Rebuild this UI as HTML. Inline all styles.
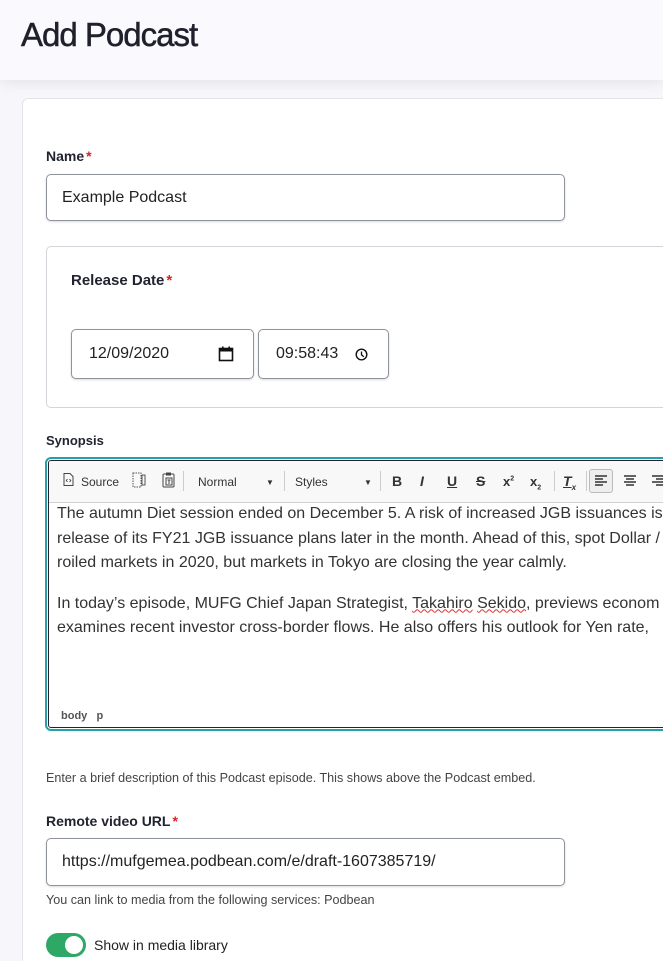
<!DOCTYPE html>
<html><head><meta charset="utf-8"><style>
*{box-sizing:border-box;margin:0;padding:0}
html,body{width:663px;height:961px;overflow:hidden}
body{background:#f7f7fb;font-family:"Liberation Sans",sans-serif;color:#222330;position:relative}
.hdr{position:absolute;left:0;top:0;width:663px;height:80px;background:#f9f9fe;box-shadow:0 4px 12px rgba(0,0,0,.07)}
.hdr h1{position:absolute;left:21px;top:16px;font-size:33px;font-weight:normal;letter-spacing:-1px;color:#1f202b;-webkit-text-stroke:.5px #1f202b}
.card{position:absolute;left:22px;top:98px;width:660px;height:900px;background:#fff;border:1px solid #e3e3ea;border-radius:6px}
.lbl{position:absolute;font-size:14px;font-weight:bold;color:#222330}
.lbl span{color:#d72222;margin-left:2px}
.inp{position:absolute;background:#fff;border:1px solid #8e929c;border-radius:5px;box-shadow:0 1px 2px rgba(0,0,0,.15);font-size:16px;color:#222;padding-left:15px;display:flex;align-items:center}
.fs{position:absolute;left:46px;top:246px;width:640px;height:162px;border:1px solid #d4d4da;border-radius:5px}
.ed{position:absolute;left:45px;top:457px;width:640px;height:274px;border:2px solid #26a0a6;border-radius:6px}
.edi{position:absolute;left:1px;top:1px;right:0;bottom:1px;border:1px solid #222330;border-radius:3px;background:#fff;overflow:hidden}
.tb{height:42px;background:#f8f8f8;border-bottom:1px solid #d1d1d1;position:relative;font-size:12px;color:#333}
.tb span{position:absolute;top:14px}
.txt{position:absolute;left:8px;top:41px;font-size:16px;color:#333;white-space:nowrap;line-height:24.5px}
.help{position:absolute;font-size:12.6px;color:#444;left:46px}
</style></head><body>
<div class="hdr"><h1>Add Podcast</h1></div>
<div class="card"></div>
<div class="lbl" style="left:46px;top:148px">Name<span>*</span></div>
<div class="inp" style="left:46px;top:174px;width:519px;height:47px">Example Podcast</div>
<div class="fs"></div>
<div class="lbl" style="left:71px;top:272px;font-size:15px">Release Date<span>*</span></div>
<div class="inp" style="left:71px;top:329px;width:183px;height:50px;padding-left:17px">12/09/2020
<svg style="position:absolute;left:146px;top:16px" width="16" height="16" viewBox="0 0 16 16"><rect x="1.5" y="2.5" width="13" height="12" fill="none" stroke="#111" stroke-width="1.6"/><rect x="1.5" y="2.5" width="13" height="3" fill="#111"/><rect x="4" y="0.5" width="1.6" height="3" fill="#111"/><rect x="10.4" y="0.5" width="1.6" height="3" fill="#111"/></svg></div>
<div class="inp" style="left:258px;top:329px;width:131px;height:50px;padding-left:17px">09:58:43
<svg style="position:absolute;left:96px;top:18px" width="13" height="13" viewBox="0 0 13 13"><circle cx="6.5" cy="6.5" r="5.3" fill="none" stroke="#111" stroke-width="1.4"/><path d="M6.5 3.5V6.8L8.8 8.8" fill="none" stroke="#111" stroke-width="1.3"/></svg></div>
<div class="lbl" style="left:46px;top:433px;font-size:13px">Synopsis</div>
<div class="ed"><div class="edi">
<div class="tb">
<span style="left:14px;top:12px"><svg width="11" height="13" viewBox="0 0 11 13"><path d="M1 .5h6l3 3v9H1z" fill="none" stroke="#444"/><path d="M4.5 6l-1.3 1.5 1.3 1.5M6.5 6l1.3 1.5-1.3 1.5" fill="none" stroke="#444" stroke-width=".9"/></svg></span>
<span style="left:32px">Source</span>
<span style="left:83px;top:11px"><svg width="14" height="16" viewBox="0 0 14 16"><rect x="1" y="1" width="8" height="14" fill="none" stroke="#555" stroke-dasharray="1.5 1"/><rect x="10" y="3" width="3" height="10" fill="none" stroke="#555"/></svg></span>
<span style="left:113px;top:11px"><svg width="13" height="16" viewBox="0 0 13 16"><rect x="1" y="2" width="11" height="13" rx="1" fill="none" stroke="#444"/><rect x="4" y="0.5" width="5" height="3" fill="#444"/><rect x="4" y="6" width="6" height="7" fill="none" stroke="#444"/><path d="M5.5 8h3M7 8v4" stroke="#444"/></svg></span>
<span style="left:134px;top:10px;width:1px;height:20px;background:#ccc"></span>
<span style="left:149px">Normal</span><span style="left:217px;font-size:8px;top:17px">▼</span>
<span style="left:235px;top:10px;width:1px;height:20px;background:#ccc"></span>
<span style="left:246px">Styles</span><span style="left:315px;font-size:8px;top:17px">▼</span>
<span style="left:331px;top:10px;width:1px;height:20px;background:#ccc"></span>
<span style="left:343px;font-weight:bold;font-size:14px;top:12px">B</span>
<span style="left:371px;font-style:italic;font-weight:bold;font-size:14px;top:12px">I</span>
<span style="left:398px;font-weight:bold;text-decoration:underline;font-size:14px;top:12px">U</span>
<span style="left:427px;font-weight:bold;text-decoration:line-through;font-size:14px;top:12px">S</span>
<span style="left:454px;font-weight:bold;font-size:13px;top:13px">x<sup style="font-size:7px">2</sup></span>
<span style="left:481px;font-weight:bold;font-size:13px;top:13px">x<sub style="font-size:7px">2</sub></span>
<span style="left:505px;top:10px;width:1px;height:20px;background:#ccc"></span>
<span style="left:514px;font-weight:bold;font-style:italic;text-decoration:underline;font-size:14px;top:12px">T<sub style="font-size:8px">x</sub></span>
<span style="left:537px;top:10px;width:1px;height:20px;background:#ccc"></span>
<span style="left:540px;top:8px;width:24px;height:24px;border:1px solid #bbb;border-radius:3px;background:#eee"></span>
<span style="left:546px;top:14px"><svg width="12" height="12" viewBox="0 0 12 12"><path d="M0 1h12M0 4h8M0 7h12M0 10h8" stroke="#333" stroke-width="1.5"/></svg></span>
<span style="left:575px;top:14px"><svg width="12" height="12" viewBox="0 0 12 12"><path d="M0 1h12M2 4h8M0 7h12M2 10h8" stroke="#333" stroke-width="1.5"/></svg></span>
<span style="left:603px;top:14px"><svg width="12" height="12" viewBox="0 0 12 12"><path d="M0 1h12M4 4h8M0 7h12M4 10h8" stroke="#333" stroke-width="1.5"/></svg></span>
</div>
<div class="txt">The autumn Diet session ended on December 5. A risk of increased JGB issuances is<br>release of its FY21 JGB issuance plans later in the month. Ahead of this, spot Dollar /<br>roiled markets in 2020, but markets in Tokyo are closing the year calmly.<div style="height:16px"></div>In today’s episode, MUFG Chief Japan Strategist, <span style="text-decoration:underline wavy #d33;text-decoration-thickness:1px">Takahiro</span> <span style="text-decoration:underline wavy #d33;text-decoration-thickness:1px">Sekido</span>, previews econom<br>examines recent investor cross-border flows. He also offers his outlook for Yen rate,</div>
<div style="position:absolute;left:12px;top:249px;font-size:11px;font-weight:bold;color:#555">body&nbsp;&nbsp;&nbsp;p</div>
</div></div>
<div class="help" style="top:771px">Enter a brief description of this Podcast episode. This shows above the Podcast embed.</div>
<div class="lbl" style="left:46px;top:813px">Remote video URL<span>*</span></div>
<div class="inp" style="left:46px;top:838px;width:519px;height:48px">https://mufgemea.podbean.com/e/draft-1607385719/</div>
<div class="help" style="top:893px">You can link to media from the following services: Podbean</div>
<div style="position:absolute;left:46px;top:933px;width:40px;height:24px;border-radius:12px;background:#2ea866"><div style="position:absolute;right:3px;top:3px;width:18px;height:18px;border-radius:50%;background:#fff"></div></div>
<div style="position:absolute;left:94px;top:937px;font-size:14px;color:#222">Show in media library</div>
</body></html>
